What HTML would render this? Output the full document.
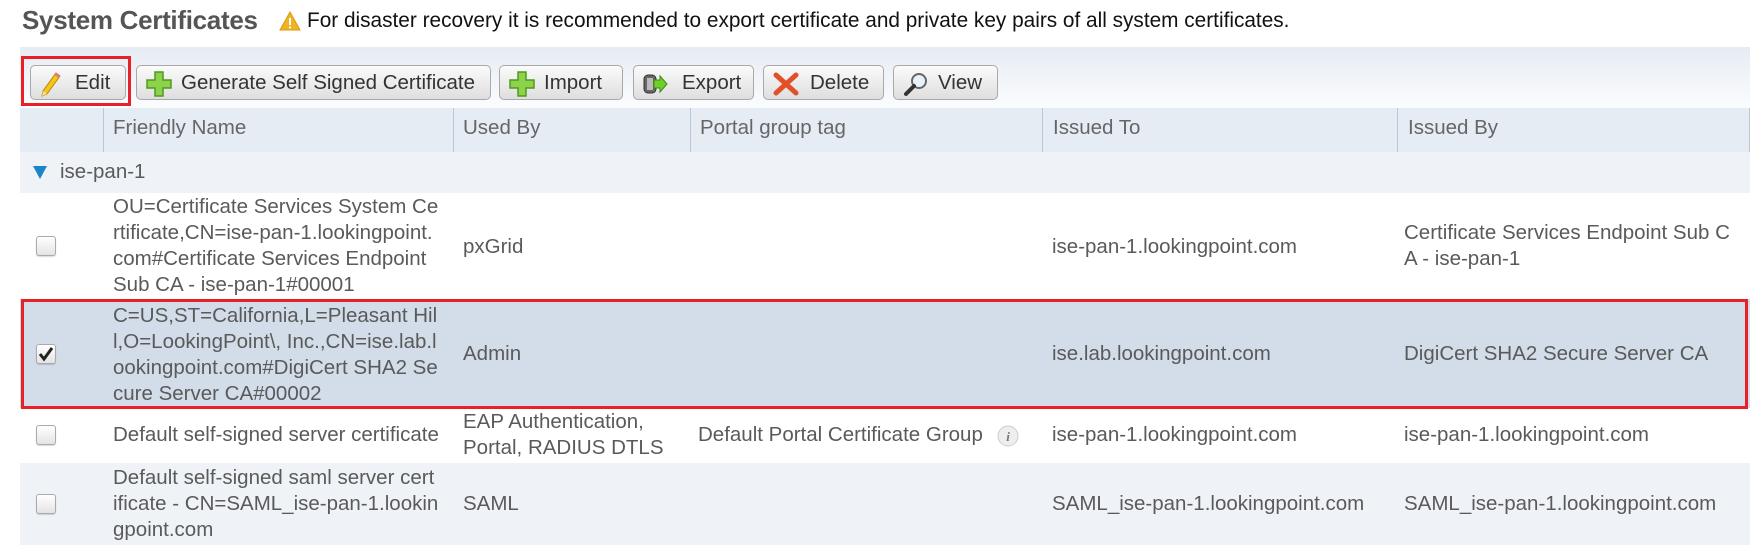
<!DOCTYPE html>
<html><head><meta charset="utf-8"><style>
*{box-sizing:border-box;margin:0;padding:0}
body{width:1750px;height:554px;background:#fff;font-family:"Liberation Sans",Arial,sans-serif;color:#5a5a5a;position:relative;overflow:hidden}
.abs{position:absolute}
.title{left:22px;top:5px;font-size:26px;font-weight:bold;color:#555;letter-spacing:-0.3px}
.warn{left:307px;top:9px;font-size:20.8px;color:#111;white-space:nowrap}
.tb{left:20px;top:47px;width:1730px;height:61px;background:linear-gradient(#e6ecf3,#fbfcfd)}
.btn{position:absolute;top:65px;height:35px;border:1px solid #a9a9a9;border-radius:5px;background:linear-gradient(#fbfbfb,#dedede);font-size:20.5px;color:#333;line-height:33px;white-space:nowrap}
.btn svg{position:absolute;left:8px;top:5px}
.btn span{position:absolute;left:40px}
.hdr{left:20px;top:108px;width:1730px;height:44px;background:#e6ecf4}
.grp{left:20px;top:152px;width:1730px;height:41px;background:#eff3f7}
.vl{position:absolute;top:108px;height:44px;width:1px;background:#bcc7d3}
.ht{position:absolute;top:116px;font-size:20.5px;color:#666}
.cell{position:absolute;font-size:20.5px;line-height:26px;color:#5a5a5a;white-space:nowrap}
.cb{position:absolute;left:36px;width:20px;height:20px;border:1px solid #aaa;border-radius:3px;background:linear-gradient(#fff,#e4e4e4);box-shadow:0 1px 1px rgba(0,0,0,.15)}
</style></head><body>
<div class="abs title">System Certificates</div>
<svg class="abs" style="left:279px;top:11px" width="22" height="20" viewBox="0 0 22 20"><path d="M11 1 L21 19 L1 19 Z" fill="#f0b323" stroke="#d89a10" stroke-width="1"/><rect x="10" y="7" width="2" height="7" fill="#fff"/><rect x="10" y="15.5" width="2" height="2" fill="#fff"/></svg>
<div class="abs warn">For disaster recovery it is recommended to export certificate and private key pairs of all system certificates.</div>

<div class="abs tb"></div>
<div class="btn" style="left:30px;width:96px"><svg width="24" height="26" viewBox="0 0 24 26"><path d="M17 2 L21 5 L8 23 L3 25 L4 20 Z" fill="#f5c518" stroke="#b8860b" stroke-width="1"/><path d="M17 2 L21 5 L19.5 7 L15.5 4 Z" fill="#e8788a"/><path d="M3 25 L4 20 L8 23 Z" fill="#f3d9a6"/></svg><span style="left:44px">Edit</span></div>
<div class="abs" style="left:21px;top:56px;width:110px;height:50px;border:3px solid #e8202a"></div>
<div class="btn" style="left:136px;width:355px"><svg width="28" height="26" viewBox="0 0 28 26"><path d="M10 1h8v8h8v8h-8v8h-8v-8H2V9h8z" fill="#8cd24a" stroke="#4f9a1d" stroke-width="1.5"/></svg><span style="left:44px">Generate Self Signed Certificate</span></div>
<div class="btn" style="left:499px;width:124px"><svg width="28" height="26" viewBox="0 0 28 26"><path d="M10 1h8v8h8v8h-8v8h-8v-8H2V9h8z" fill="#8cd24a" stroke="#4f9a1d" stroke-width="1.5"/></svg><span style="left:44px">Import</span></div>
<div class="btn" style="left:633px;width:121px"><svg width="28" height="26" viewBox="0 0 28 26"><rect x="2" y="4" width="12" height="18" rx="4" fill="#666" stroke="#333"/><rect x="5" y="7" width="6" height="12" fill="#bbb"/><path d="M12 9h6V5l7 8-7 8v-4h-6z" fill="#6fd02a" stroke="#3d8a10"/></svg><span style="left:48px">Export</span></div>
<div class="btn" style="left:763px;width:121px"><svg width="28" height="26" viewBox="0 0 28 26"><path d="M4 4 L24 22 M24 4 L4 22" stroke="#e2502a" stroke-width="5" stroke-linecap="round"/></svg><span style="left:46px">Delete</span></div>
<div class="btn" style="left:893px;width:105px"><svg width="28" height="26" viewBox="0 0 28 26"><circle cx="17" cy="10" r="7" fill="#e8f2fb" stroke="#666" stroke-width="2"/><path d="M12 15 L4 23" stroke="#333" stroke-width="4" stroke-linecap="round"/></svg><span style="left:44px">View</span></div>

<div class="abs hdr"></div>
<div class="vl" style="left:103px"></div><div class="vl" style="left:453px"></div><div class="vl" style="left:690px"></div><div class="vl" style="left:1042px"></div><div class="vl" style="left:1397px"></div><div class="vl" style="left:1749px"></div>
<div class="ht" style="left:113px">Friendly Name</div>
<div class="ht" style="left:463px">Used By</div>
<div class="ht" style="left:700px">Portal group tag</div>
<div class="ht" style="left:1053px">Issued To</div>
<div class="ht" style="left:1408px">Issued By</div>

<div class="abs grp"></div>
<svg class="abs" style="left:33px;top:166px" width="14" height="13" viewBox="0 0 14 13"><path d="M0 0h14L7 13z" fill="#1a86c8"/></svg>
<div class="cell" style="left:60px;top:159px">ise-pan-1</div>

<!-- row1 -->
<div class="cb" style="top:236px"></div>
<div class="cell" style="left:113px;top:194px">OU=Certificate Services System Ce<br>rtificate,CN=ise-pan-1.lookingpoint.<br>com#Certificate Services Endpoint<br>Sub CA - ise-pan-1#00001</div>
<div class="cell" style="left:463px;top:234px">pxGrid</div>
<div class="cell" style="left:1052px;top:234px">ise-pan-1.lookingpoint.com</div>
<div class="cell" style="left:1404px;top:220px">Certificate Services Endpoint Sub C<br>A - ise-pan-1</div>

<!-- row2 -->
<div class="abs" style="left:20px;top:299px;width:1730px;height:109px;background:#d2dde9"></div>
<div class="abs" style="left:21px;top:299px;width:1727px;height:110px;border:3px solid #e8202a"></div>
<div class="cb" style="top:344px"></div>
<svg class="abs" style="left:38px;top:346px" width="16" height="16" viewBox="0 0 16 16"><path d="M2 8 L6 13 L14 2" stroke="#222" stroke-width="3" fill="none"/></svg>
<div class="cell" style="left:113px;top:303px">C=US,ST=California,L=Pleasant Hil<br>l,O=LookingPoint\, Inc.,CN=ise.lab.l<br>ookingpoint.com#DigiCert SHA2 Se<br>cure Server CA#00002</div>
<div class="cell" style="left:463px;top:341px">Admin</div>
<div class="cell" style="left:1052px;top:341px">ise.lab.lookingpoint.com</div>
<div class="cell" style="left:1404px;top:341px">DigiCert SHA2 Secure Server CA</div>

<!-- row3 -->
<div class="cb" style="top:425px"></div>
<div class="cell" style="left:113px;top:422px">Default self-signed server certificate</div>
<div class="cell" style="left:463px;top:409px">EAP Authentication,<br>Portal, RADIUS DTLS</div>
<div class="cell" style="left:698px;top:422px">Default Portal Certificate Group</div>
<svg class="abs" style="left:997px;top:425px" width="22" height="22" viewBox="0 0 22 22"><circle cx="11" cy="11" r="10" fill="#eee" stroke="#ccc"/><text x="11" y="16" font-size="13" font-style="italic" font-weight="bold" text-anchor="middle" fill="#777" font-family="Liberation Serif,serif">i</text></svg>
<div class="cell" style="left:1052px;top:422px">ise-pan-1.lookingpoint.com</div>
<div class="cell" style="left:1404px;top:422px">ise-pan-1.lookingpoint.com</div>

<!-- row4 -->
<div class="abs" style="left:20px;top:463px;width:1730px;height:82px;background:#eff3f7"></div>
<div class="cb" style="top:494px"></div>
<div class="cell" style="left:113px;top:465px">Default self-signed saml server cert<br>ificate - CN=SAML_ise-pan-1.lookin<br>gpoint.com</div>
<div class="cell" style="left:463px;top:491px">SAML</div>
<div class="cell" style="left:1052px;top:491px">SAML_ise-pan-1.lookingpoint.com</div>
<div class="cell" style="left:1404px;top:491px">SAML_ise-pan-1.lookingpoint.com</div>
</body></html>
